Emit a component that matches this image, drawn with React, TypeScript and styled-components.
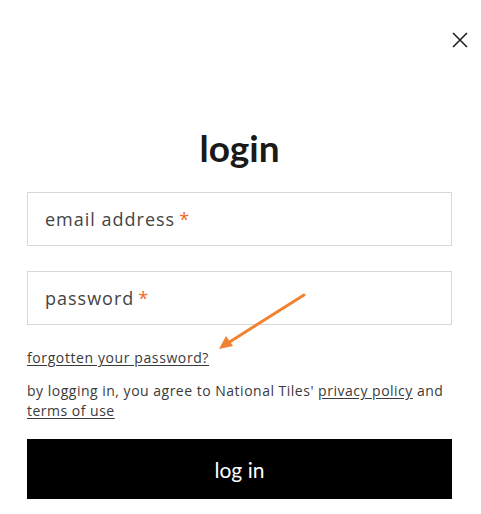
import styled, { createGlobalStyle } from 'styled-components';

const GlobalStyle = createGlobalStyle`
  html, body {
    margin: 0;
    padding: 0;
    background: #ffffff;
  }
  * {
    box-sizing: border-box;
  }
`;

const Modal = styled.div`
  position: relative;
  width: 481px;
  height: 514px;
  padding: 0 29px 0 27px;
  background: #ffffff;
  font-family: 'Lato', 'Open Sans', sans-serif;
  color: #222;
`;

const TopBar = styled.div`
  display: flex;
  justify-content: flex-end;
  padding-top: 32px;
  margin-right: -16px;
`;

const CloseButton = styled.button`
  display: flex;
  width: 16px;
  height: 16px;
  padding: 0;
  border: none;
  background: none;
  cursor: pointer;
`;

const Title = styled.h1`
  margin: 78px 0 0;
  font-size: 37px;
  line-height: 44px;
  font-weight: 700;
  text-align: center;
  color: #1a1a1a;
`;

const Form = styled.form`
  display: flex;
  flex-direction: column;
  gap: 25px;
  margin-top: 22px;
`;

const Field = styled.label`
  display: flex;
  align-items: center;
  height: 54px;
  padding: 0 17px;
  border: 1px solid #d8d8d8;
  font-family: 'Open Sans', sans-serif;
  font-size: 18px;
  letter-spacing: 1px;
  color: #444;
`;

const Required = styled.span`
  margin-left: 4px;
  color: #f06a2a;
`;

const Small = styled.p<{ $top: number }>`
  margin: ${(p) => p.$top}px 0 0;
  font-family: 'Open Sans', sans-serif;
  font-size: 14px;
  line-height: 20px;
  letter-spacing: 0.5px;
  color: #3a3a3a;
`;

const Link = styled.a`
  color: #3a3a3a;
  text-decoration: underline;
  text-underline-offset: 2px;
`;

const ForgotLink = styled(Link)`
  letter-spacing: 0.6px;
`;

const SubmitButton = styled.button`
  display: block;
  width: 100%;
  height: 60px;
  margin-top: 18px;
  border: none;
  background: #000000;
  color: #ffffff;
  font-family: 'Lato', sans-serif;
  font-size: 21px;
  cursor: pointer;
`;

const Annotation = styled.svg`
  position: absolute;
  left: 0;
  top: 0;
  pointer-events: none;
`;

export default function App() {
  return (
    <>
      <GlobalStyle />
      <Modal>
        <TopBar>
          <CloseButton aria-label="close">
            <svg width="16" height="16" viewBox="0 0 16 16">
              <path d="M1 1L15 15M15 1L1 15" stroke="#222" strokeWidth="1.6" />
            </svg>
          </CloseButton>
        </TopBar>
        <Title>login</Title>
        <Form onSubmit={(e) => e.preventDefault()}>
          <Field>
            email address<Required>*</Required>
          </Field>
          <Field>
            password<Required>*</Required>
          </Field>
        </Form>
        <Small $top={23}>
          <ForgotLink href="#">forgotten your password?</ForgotLink>
        </Small>
        <Small $top={13}>
          by logging in, you agree to National Tiles' <Link href="#">privacy policy</Link> and{' '}
          <Link href="#">terms of use</Link>
        </Small>
        <SubmitButton type="button">log in</SubmitButton>
        <Annotation width="481" height="514">
          <line x1="304" y1="295" x2="228" y2="343" stroke="#f08232" strokeWidth="3" strokeLinecap="round" />
          <polygon points="219,349 226,336 233,346" fill="#f08232" />
        </Annotation>
      </Modal>
    </>
  );
}
